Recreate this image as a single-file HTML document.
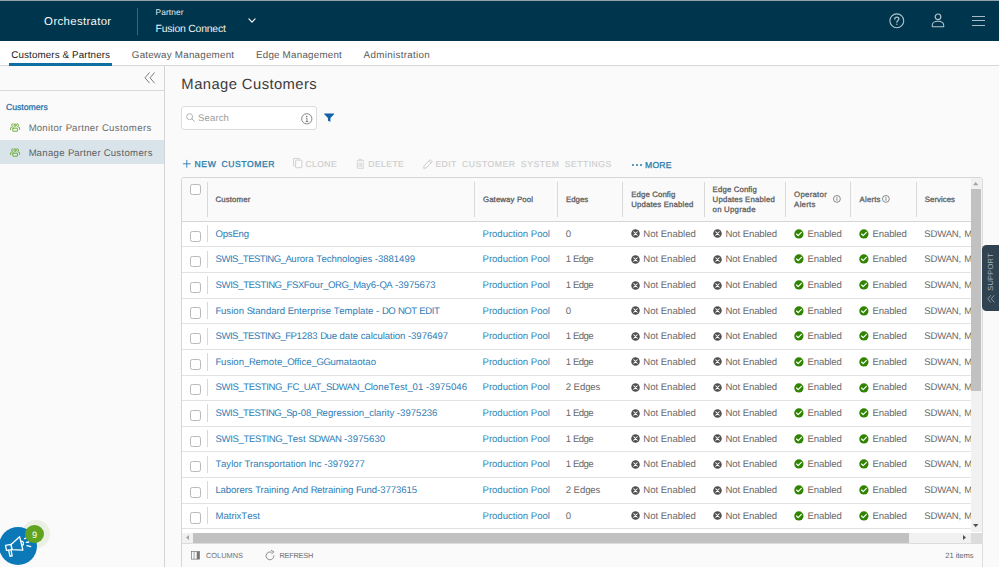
<!DOCTYPE html>
<html><head><meta charset="utf-8"><title>Orchestrator</title>
<style>
*{box-sizing:border-box;margin:0;padding:0}
html,body{width:999px;height:567px;overflow:hidden;background:#fafafa;font-family:"Liberation Sans",sans-serif}
.a{position:absolute}
.t{position:absolute;white-space:pre;font-family:"Liberation Sans",sans-serif;text-rendering:geometricPrecision}
.ic{position:absolute;overflow:visible}
#hdr{left:0;top:0;width:999px;height:41.3px;background:#00364d}
#topline{left:0;top:0;width:999px;height:1px;background:#93a1a8}
#nav{left:0;top:41.3px;width:999px;height:24.5px;background:#fff;border-bottom:1px solid #d7d7d7}
#navact{left:9px;top:63.1px;width:103px;height:2.5px;background:#0f6fa3}
#side{left:0;top:65.8px;width:164.6px;height:502px;background:#fafafa;border-right:1px solid #d4d4d4}
#sidetop{left:0;top:90px;width:164px;height:1px;background:#d9d9d9}
#sel{left:0;top:139.6px;width:164px;height:24.3px;background:#d9e4ea}
#search{left:181px;top:106px;width:135.6px;height:24px;background:#fff;border:1px solid #dcdcdc;border-radius:3px}
#tbl{left:181px;top:176.8px;width:801.6px;height:400px;background:#fff;border:1px solid #d6d6d6;border-radius:3px}
#thead{left:182px;top:177.8px;width:789px;height:42.9px;background:#fafafa;border-radius:2px 0 0 0}
#theadb{left:182px;top:220.6px;width:789px;height:1px;background:#d6d6d6}
.rb{position:absolute;left:182px;width:789px;height:1px;background:#e2e2e2}
.cb{position:absolute;left:189.5px;width:11.2px;height:11.2px;border:1px solid #b9b9b9;border-radius:2.4px;background:#fff}
.vs{position:absolute;left:206.7px;width:1px;height:17.4px;background:#d8d8d8}
.hs{position:absolute;top:181.600px;width:1px;height:35.400px;background:#d9d9d9}
#vsb{left:971px;top:177.8px;width:10.6px;height:354.7px;background:#f1f1f1;border-radius:0 2px 0 0}
#vthumb{left:971px;top:189px;width:10px;height:202px;background:#c1c1c1}
#hsb{left:182px;top:532.5px;width:789px;height:10.2px;background:#f1f1f1}
#hthumb{left:193px;top:532.5px;width:716px;height:10.2px;background:#c1c1c1}
#corner{left:971px;top:532.5px;width:10.6px;height:10.2px;background:#dcdcdc}
#foot{left:182px;top:542.7px;width:799.6px;height:30px;background:#fafafa;border-top:1px solid #dcdcdc}
#support{left:982.2px;top:245.2px;width:20px;height:65.8px;background:#314351;border-radius:4.5px 0 0 4.5px}
</style></head><body>
<div class="a" id="hdr"></div><div class="a" id="topline"></div>
<div class="a" style="left:137.300px;top:7.500px;width:1px;height:27px;background:#3d6577"></div>
<svg class="ic" style="left:247.5px;top:18.2px" width="8" height="5.3" viewBox="0 0 9 6"><path d="M1 1 L4.5 4.6 L8 1" fill="none" stroke="#fafafa" stroke-width="1.3" stroke-linecap="round" stroke-linejoin="round"/></svg>
<!-- help -->
<svg class="ic" style="left:889.2px;top:13.2px" width="15.6" height="15.6" viewBox="0 0 36 36"><circle cx="18" cy="18" r="16" fill="none" stroke="#b4c4cc" stroke-width="2.500"/><path d="M13.2 14.2 C13.2 11 15.4 9.6 18 9.6 C20.8 9.6 22.8 11.2 22.8 13.8 C22.8 17.4 18.2 17.2 18.2 21.4" fill="none" stroke="#b4c4cc" stroke-width="2.700" stroke-linecap="round"/><circle cx="18.2" cy="26" r="1.6" fill="#b4c4cc"/></svg>
<!-- user -->
<svg class="ic" style="left:931px;top:13.4px" width="14" height="15" viewBox="0 0 28 30"><circle cx="14" cy="7.600" r="5.600" fill="none" stroke="#b4c4cc" stroke-width="2.400"/><path d="M2.6 27.6 L2.6 24 C2.6 19.6 6.6 16.6 14 16.6 C21.4 16.6 25.4 19.6 25.4 24 L25.4 27.6 Z" fill="none" stroke="#b4c4cc" stroke-width="2.1" stroke-linejoin="round"/></svg>
<!-- hamburger -->
<div class="a" style="left:971.6px;top:15.7px;width:13.7px;height:1.1px;background:#a9bac3"></div>
<div class="a" style="left:971.6px;top:20.4px;width:13.7px;height:1.1px;background:#a9bac3"></div>
<div class="a" style="left:971.6px;top:25.2px;width:13.7px;height:1.1px;background:#a9bac3"></div>

<div class="a" id="nav"></div><div class="a" id="navact"></div>
<div class="a" id="side"></div><div class="a" id="sidetop"></div><div class="a" id="sel"></div>
<!-- collapse -->
<svg class="ic" style="left:143.6px;top:72.4px" width="11.6" height="11.6" viewBox="0 0 23 23"><path d="M10.5 1.5 L2 11.5 L10.5 21.5 M20.5 1.5 L12 11.5 L20.5 21.5" fill="none" stroke="#666" stroke-width="1.7" stroke-linecap="round" stroke-linejoin="round"/></svg>
<!-- users icons -->
<svg class="ic" style="left:9.5px;top:123.1px" width="10.2" height="8.8" viewBox="0 0 10.2 8.8"><g fill="none" stroke="#5fa624" stroke-width="0.9" stroke-linecap="round"><circle cx="5.1" cy="2.2" r="1.2"/><rect x="2.75" y="5.15" width="4.7" height="3.1" rx="0.4"/><path d="M3.1 0.600 C1.500 0.700 1.100 2.700 2.300 3.500"/><path d="M7.100 0.600 C8.700 0.700 9.100 2.700 7.900 3.500"/><path d="M0.600 6.500 L0.600 5.100 C0.600 4.300 1.200 3.900 2 4"/><path d="M9.600 6.500 L9.600 5.100 C9.600 4.300 9 3.900 8.200 4"/></g></svg>
<svg class="ic" style="left:9.5px;top:147.6px" width="10.2" height="8.8" viewBox="0 0 10.2 8.8"><g fill="none" stroke="#5fa624" stroke-width="0.9" stroke-linecap="round"><circle cx="5.1" cy="2.2" r="1.2"/><rect x="2.75" y="5.15" width="4.7" height="3.1" rx="0.4"/><path d="M3.1 0.600 C1.500 0.700 1.100 2.700 2.300 3.500"/><path d="M7.100 0.600 C8.700 0.700 9.100 2.700 7.900 3.500"/><path d="M0.600 6.500 L0.600 5.100 C0.600 4.300 1.200 3.900 2 4"/><path d="M9.600 6.500 L9.600 5.100 C9.600 4.300 9 3.900 8.200 4"/></g></svg>

<div class="a" id="search"></div>
<svg class="ic" style="left:185.7px;top:112.9px" width="9.2" height="9.2" viewBox="0 0 19 19"><circle cx="7.6" cy="7.6" r="6.2" fill="none" stroke="#999" stroke-width="1.5"/><path d="M12.2 12.2 L17.4 17.4" stroke="#999" stroke-width="1.7" stroke-linecap="round"/></svg>
<svg class="ic" style="left:301.300px;top:112.700px" width="11.600" height="11.600" viewBox="0 0 24 24"><circle cx="12" cy="12" r="10.6" fill="none" stroke="#6a6a6a" stroke-width="1.7"/><circle cx="12" cy="7" r="1.5" fill="#6a6a6a"/><path d="M10 10.6 L12.4 10.6 L12.4 17.6 M9.6 17.8 L15 17.8" fill="none" stroke="#6a6a6a" stroke-width="1.7"/></svg>
<svg class="ic" style="left:323.800px;top:112.800px" width="10.400" height="9.200" viewBox="0 0 22 19"><path d="M0.6 0.6 L21.4 0.6 L21.4 2.4 L13.6 10.4 L13.6 18.4 L8.4 16 L8.4 10.4 L0.6 2.4 Z" fill="#0f62a8"/></svg>

<!-- action icons -->
<svg class="ic" style="left:183.2px;top:159.9px" width="7.6" height="7.6" viewBox="0 0 16 16"><path d="M8 0.6 L8 15.400 M0.6 8 L15.400 8" stroke="#2b7db3" stroke-width="1.9" stroke-linecap="round"/></svg>
<svg class="ic" style="left:292.8px;top:158.4px" width="9.4" height="10.2" viewBox="0 0 18.8 20.400"><path d="M3.400 15.600 L1 15.600 L1 1 L12.600 1 L12.600 3" fill="none" stroke="#cdcdcd" stroke-width="1.700" stroke-linejoin="round"/><rect x="5.200" y="4.200" width="12.600" height="15.200" rx="1.400" fill="none" stroke="#cdcdcd" stroke-width="1.900"/></svg>
<svg class="ic" style="left:356.2px;top:158.6px" width="8.6" height="9.800" viewBox="0 0 17 20"><path d="M0.6 3.600 L16.400 3.600 M5.600 3.400 L5.600 0.800 L11.4 0.800 L11.4 3.400" fill="none" stroke="#cdcdcd" stroke-width="1.6"/><path d="M2.4 6 L2.4 19 L14.6 19 L14.6 6" fill="none" stroke="#cdcdcd" stroke-width="1.7"/><path d="M6 7.600 L6 16 M8.5 7.600 L8.5 16 M11 7.600 L11 16" stroke="#cdcdcd" stroke-width="1.4"/></svg>
<svg class="ic" style="left:422.800px;top:158.700px" width="10" height="10" viewBox="0 0 20 20"><path d="M14.600 1.200 L18.800 5.400 L6.400 17.800 L1.400 18.600 L2.200 13.600 Z M12 3.800 L16.200 8" fill="none" stroke="#c6c6c6" stroke-width="1.800" stroke-linejoin="round"/></svg>
<div class="a" style="left:632.2px;top:163.900px;width:2.1px;height:2.1px;border-radius:50%;background:#2b7db3"></div>
<div class="a" style="left:636.3px;top:163.900px;width:2.1px;height:2.1px;border-radius:50%;background:#2b7db3"></div>
<div class="a" style="left:640.4px;top:163.900px;width:2.1px;height:2.1px;border-radius:50%;background:#2b7db3"></div>

<!-- table -->
<div class="a" id="tbl"></div><div class="a" id="thead"></div><div class="a" id="theadb"></div>
<div class="cb" style="top:183.800px"></div>
<div class="hs" style="left:206.7px"></div><div class="hs" style="left:474px"></div><div class="hs" style="left:557.2px"></div><div class="hs" style="left:622.3px"></div><div class="hs" style="left:703.7px"></div><div class="hs" style="left:785.4px"></div><div class="hs" style="left:850.4px"></div><div class="hs" style="left:915.800px"></div>
<!-- header info icons -->
<svg class="ic" style="left:832.8000000000001px;top:195.200px" width="7.800" height="7.800" viewBox="0 0 24 24"><circle cx="12" cy="12" r="10.600" fill="none" stroke="#5e5e5e" stroke-width="2.200"/><circle cx="12" cy="7" r="1.700" fill="#5e5e5e"/><path d="M12 10.400 L12 17.600" stroke="#5e5e5e" stroke-width="2.400"/></svg>
<svg class="ic" style="left:882.2px;top:195.200px" width="7.800" height="7.800" viewBox="0 0 24 24"><circle cx="12" cy="12" r="10.600" fill="none" stroke="#5e5e5e" stroke-width="2.200"/><circle cx="12" cy="7" r="1.700" fill="#5e5e5e"/><path d="M12 10.400 L12 17.600" stroke="#5e5e5e" stroke-width="2.400"/></svg>
<div class="a" id="foot"></div>
<div class="rb" style="top:246.38px"></div><div class="cb" style="top:230.55px"></div><div class="vs" style="top:225.05px"></div>
<svg class="ic" style="left:630.75px;top:229.25px" width="9" height="9" viewBox="0 0 36 36"><circle cx="18" cy="18" r="17" fill="#505050"/><path d="M11 11 L25 25 M25 11 L11 25" stroke="#fff" stroke-width="4.2" stroke-linecap="round"/></svg>
<svg class="ic" style="left:712.50px;top:229.25px" width="9" height="9" viewBox="0 0 36 36"><circle cx="18" cy="18" r="17" fill="#505050"/><path d="M11 11 L25 25 M25 11 L11 25" stroke="#fff" stroke-width="4.2" stroke-linecap="round"/></svg>
<svg class="ic" style="left:794.00px;top:228.85px" width="9.8" height="9.8" viewBox="0 0 36 36"><circle cx="18" cy="18" r="17" fill="#2f8400"/><path d="M9.5 18.5 L15.5 24.5 L27 12.5" fill="none" stroke="#fff" stroke-width="4.4" stroke-linecap="round" stroke-linejoin="round"/></svg>
<svg class="ic" style="left:859.20px;top:228.85px" width="9.8" height="9.8" viewBox="0 0 36 36"><circle cx="18" cy="18" r="17" fill="#2f8400"/><path d="M9.5 18.5 L15.5 24.5 L27 12.5" fill="none" stroke="#fff" stroke-width="4.4" stroke-linecap="round" stroke-linejoin="round"/></svg>
<div class="rb" style="top:272.00px"></div><div class="cb" style="top:256.18px"></div><div class="vs" style="top:250.68px"></div>
<svg class="ic" style="left:630.75px;top:254.88px" width="9" height="9" viewBox="0 0 36 36"><circle cx="18" cy="18" r="17" fill="#505050"/><path d="M11 11 L25 25 M25 11 L11 25" stroke="#fff" stroke-width="4.2" stroke-linecap="round"/></svg>
<svg class="ic" style="left:712.50px;top:254.88px" width="9" height="9" viewBox="0 0 36 36"><circle cx="18" cy="18" r="17" fill="#505050"/><path d="M11 11 L25 25 M25 11 L11 25" stroke="#fff" stroke-width="4.2" stroke-linecap="round"/></svg>
<svg class="ic" style="left:794.00px;top:254.47px" width="9.8" height="9.8" viewBox="0 0 36 36"><circle cx="18" cy="18" r="17" fill="#2f8400"/><path d="M9.5 18.5 L15.5 24.5 L27 12.5" fill="none" stroke="#fff" stroke-width="4.4" stroke-linecap="round" stroke-linejoin="round"/></svg>
<svg class="ic" style="left:859.20px;top:254.47px" width="9.8" height="9.8" viewBox="0 0 36 36"><circle cx="18" cy="18" r="17" fill="#2f8400"/><path d="M9.5 18.5 L15.5 24.5 L27 12.5" fill="none" stroke="#fff" stroke-width="4.4" stroke-linecap="round" stroke-linejoin="round"/></svg>
<div class="rb" style="top:297.62px"></div><div class="cb" style="top:281.80px"></div><div class="vs" style="top:276.30px"></div>
<svg class="ic" style="left:630.75px;top:280.50px" width="9" height="9" viewBox="0 0 36 36"><circle cx="18" cy="18" r="17" fill="#505050"/><path d="M11 11 L25 25 M25 11 L11 25" stroke="#fff" stroke-width="4.2" stroke-linecap="round"/></svg>
<svg class="ic" style="left:712.50px;top:280.50px" width="9" height="9" viewBox="0 0 36 36"><circle cx="18" cy="18" r="17" fill="#505050"/><path d="M11 11 L25 25 M25 11 L11 25" stroke="#fff" stroke-width="4.2" stroke-linecap="round"/></svg>
<svg class="ic" style="left:794.00px;top:280.10px" width="9.8" height="9.8" viewBox="0 0 36 36"><circle cx="18" cy="18" r="17" fill="#2f8400"/><path d="M9.5 18.5 L15.5 24.5 L27 12.5" fill="none" stroke="#fff" stroke-width="4.4" stroke-linecap="round" stroke-linejoin="round"/></svg>
<svg class="ic" style="left:859.20px;top:280.10px" width="9.8" height="9.8" viewBox="0 0 36 36"><circle cx="18" cy="18" r="17" fill="#2f8400"/><path d="M9.5 18.5 L15.5 24.5 L27 12.5" fill="none" stroke="#fff" stroke-width="4.4" stroke-linecap="round" stroke-linejoin="round"/></svg>
<div class="rb" style="top:323.25px"></div><div class="cb" style="top:307.43px"></div><div class="vs" style="top:301.93px"></div>
<svg class="ic" style="left:630.75px;top:306.12px" width="9" height="9" viewBox="0 0 36 36"><circle cx="18" cy="18" r="17" fill="#505050"/><path d="M11 11 L25 25 M25 11 L11 25" stroke="#fff" stroke-width="4.2" stroke-linecap="round"/></svg>
<svg class="ic" style="left:712.50px;top:306.12px" width="9" height="9" viewBox="0 0 36 36"><circle cx="18" cy="18" r="17" fill="#505050"/><path d="M11 11 L25 25 M25 11 L11 25" stroke="#fff" stroke-width="4.2" stroke-linecap="round"/></svg>
<svg class="ic" style="left:794.00px;top:305.73px" width="9.8" height="9.8" viewBox="0 0 36 36"><circle cx="18" cy="18" r="17" fill="#2f8400"/><path d="M9.5 18.5 L15.5 24.5 L27 12.5" fill="none" stroke="#fff" stroke-width="4.4" stroke-linecap="round" stroke-linejoin="round"/></svg>
<svg class="ic" style="left:859.20px;top:305.73px" width="9.8" height="9.8" viewBox="0 0 36 36"><circle cx="18" cy="18" r="17" fill="#2f8400"/><path d="M9.5 18.5 L15.5 24.5 L27 12.5" fill="none" stroke="#fff" stroke-width="4.4" stroke-linecap="round" stroke-linejoin="round"/></svg>
<div class="rb" style="top:348.88px"></div><div class="cb" style="top:333.05px"></div><div class="vs" style="top:327.55px"></div>
<svg class="ic" style="left:630.75px;top:331.75px" width="9" height="9" viewBox="0 0 36 36"><circle cx="18" cy="18" r="17" fill="#505050"/><path d="M11 11 L25 25 M25 11 L11 25" stroke="#fff" stroke-width="4.2" stroke-linecap="round"/></svg>
<svg class="ic" style="left:712.50px;top:331.75px" width="9" height="9" viewBox="0 0 36 36"><circle cx="18" cy="18" r="17" fill="#505050"/><path d="M11 11 L25 25 M25 11 L11 25" stroke="#fff" stroke-width="4.2" stroke-linecap="round"/></svg>
<svg class="ic" style="left:794.00px;top:331.35px" width="9.8" height="9.8" viewBox="0 0 36 36"><circle cx="18" cy="18" r="17" fill="#2f8400"/><path d="M9.5 18.5 L15.5 24.5 L27 12.5" fill="none" stroke="#fff" stroke-width="4.4" stroke-linecap="round" stroke-linejoin="round"/></svg>
<svg class="ic" style="left:859.20px;top:331.35px" width="9.8" height="9.8" viewBox="0 0 36 36"><circle cx="18" cy="18" r="17" fill="#2f8400"/><path d="M9.5 18.5 L15.5 24.5 L27 12.5" fill="none" stroke="#fff" stroke-width="4.4" stroke-linecap="round" stroke-linejoin="round"/></svg>
<div class="rb" style="top:374.50px"></div><div class="cb" style="top:358.68px"></div><div class="vs" style="top:353.18px"></div>
<svg class="ic" style="left:630.75px;top:357.38px" width="9" height="9" viewBox="0 0 36 36"><circle cx="18" cy="18" r="17" fill="#505050"/><path d="M11 11 L25 25 M25 11 L11 25" stroke="#fff" stroke-width="4.2" stroke-linecap="round"/></svg>
<svg class="ic" style="left:712.50px;top:357.38px" width="9" height="9" viewBox="0 0 36 36"><circle cx="18" cy="18" r="17" fill="#505050"/><path d="M11 11 L25 25 M25 11 L11 25" stroke="#fff" stroke-width="4.2" stroke-linecap="round"/></svg>
<svg class="ic" style="left:794.00px;top:356.98px" width="9.8" height="9.8" viewBox="0 0 36 36"><circle cx="18" cy="18" r="17" fill="#2f8400"/><path d="M9.5 18.5 L15.5 24.5 L27 12.5" fill="none" stroke="#fff" stroke-width="4.4" stroke-linecap="round" stroke-linejoin="round"/></svg>
<svg class="ic" style="left:859.20px;top:356.98px" width="9.8" height="9.8" viewBox="0 0 36 36"><circle cx="18" cy="18" r="17" fill="#2f8400"/><path d="M9.5 18.5 L15.5 24.5 L27 12.5" fill="none" stroke="#fff" stroke-width="4.4" stroke-linecap="round" stroke-linejoin="round"/></svg>
<div class="rb" style="top:400.12px"></div><div class="cb" style="top:384.30px"></div><div class="vs" style="top:378.80px"></div>
<svg class="ic" style="left:630.75px;top:383.00px" width="9" height="9" viewBox="0 0 36 36"><circle cx="18" cy="18" r="17" fill="#505050"/><path d="M11 11 L25 25 M25 11 L11 25" stroke="#fff" stroke-width="4.2" stroke-linecap="round"/></svg>
<svg class="ic" style="left:712.50px;top:383.00px" width="9" height="9" viewBox="0 0 36 36"><circle cx="18" cy="18" r="17" fill="#505050"/><path d="M11 11 L25 25 M25 11 L11 25" stroke="#fff" stroke-width="4.2" stroke-linecap="round"/></svg>
<svg class="ic" style="left:794.00px;top:382.60px" width="9.8" height="9.8" viewBox="0 0 36 36"><circle cx="18" cy="18" r="17" fill="#2f8400"/><path d="M9.5 18.5 L15.5 24.5 L27 12.5" fill="none" stroke="#fff" stroke-width="4.4" stroke-linecap="round" stroke-linejoin="round"/></svg>
<svg class="ic" style="left:859.20px;top:382.60px" width="9.8" height="9.8" viewBox="0 0 36 36"><circle cx="18" cy="18" r="17" fill="#2f8400"/><path d="M9.5 18.5 L15.5 24.5 L27 12.5" fill="none" stroke="#fff" stroke-width="4.4" stroke-linecap="round" stroke-linejoin="round"/></svg>
<div class="rb" style="top:425.75px"></div><div class="cb" style="top:409.93px"></div><div class="vs" style="top:404.43px"></div>
<svg class="ic" style="left:630.75px;top:408.62px" width="9" height="9" viewBox="0 0 36 36"><circle cx="18" cy="18" r="17" fill="#505050"/><path d="M11 11 L25 25 M25 11 L11 25" stroke="#fff" stroke-width="4.2" stroke-linecap="round"/></svg>
<svg class="ic" style="left:712.50px;top:408.62px" width="9" height="9" viewBox="0 0 36 36"><circle cx="18" cy="18" r="17" fill="#505050"/><path d="M11 11 L25 25 M25 11 L11 25" stroke="#fff" stroke-width="4.2" stroke-linecap="round"/></svg>
<svg class="ic" style="left:794.00px;top:408.23px" width="9.8" height="9.8" viewBox="0 0 36 36"><circle cx="18" cy="18" r="17" fill="#2f8400"/><path d="M9.5 18.5 L15.5 24.5 L27 12.5" fill="none" stroke="#fff" stroke-width="4.4" stroke-linecap="round" stroke-linejoin="round"/></svg>
<svg class="ic" style="left:859.20px;top:408.23px" width="9.8" height="9.8" viewBox="0 0 36 36"><circle cx="18" cy="18" r="17" fill="#2f8400"/><path d="M9.5 18.5 L15.5 24.5 L27 12.5" fill="none" stroke="#fff" stroke-width="4.4" stroke-linecap="round" stroke-linejoin="round"/></svg>
<div class="rb" style="top:451.38px"></div><div class="cb" style="top:435.55px"></div><div class="vs" style="top:430.05px"></div>
<svg class="ic" style="left:630.75px;top:434.25px" width="9" height="9" viewBox="0 0 36 36"><circle cx="18" cy="18" r="17" fill="#505050"/><path d="M11 11 L25 25 M25 11 L11 25" stroke="#fff" stroke-width="4.2" stroke-linecap="round"/></svg>
<svg class="ic" style="left:712.50px;top:434.25px" width="9" height="9" viewBox="0 0 36 36"><circle cx="18" cy="18" r="17" fill="#505050"/><path d="M11 11 L25 25 M25 11 L11 25" stroke="#fff" stroke-width="4.2" stroke-linecap="round"/></svg>
<svg class="ic" style="left:794.00px;top:433.85px" width="9.8" height="9.8" viewBox="0 0 36 36"><circle cx="18" cy="18" r="17" fill="#2f8400"/><path d="M9.5 18.5 L15.5 24.5 L27 12.5" fill="none" stroke="#fff" stroke-width="4.4" stroke-linecap="round" stroke-linejoin="round"/></svg>
<svg class="ic" style="left:859.20px;top:433.85px" width="9.8" height="9.8" viewBox="0 0 36 36"><circle cx="18" cy="18" r="17" fill="#2f8400"/><path d="M9.5 18.5 L15.5 24.5 L27 12.5" fill="none" stroke="#fff" stroke-width="4.4" stroke-linecap="round" stroke-linejoin="round"/></svg>
<div class="rb" style="top:477.00px"></div><div class="cb" style="top:461.18px"></div><div class="vs" style="top:455.68px"></div>
<svg class="ic" style="left:630.75px;top:459.88px" width="9" height="9" viewBox="0 0 36 36"><circle cx="18" cy="18" r="17" fill="#505050"/><path d="M11 11 L25 25 M25 11 L11 25" stroke="#fff" stroke-width="4.2" stroke-linecap="round"/></svg>
<svg class="ic" style="left:712.50px;top:459.88px" width="9" height="9" viewBox="0 0 36 36"><circle cx="18" cy="18" r="17" fill="#505050"/><path d="M11 11 L25 25 M25 11 L11 25" stroke="#fff" stroke-width="4.2" stroke-linecap="round"/></svg>
<svg class="ic" style="left:794.00px;top:459.48px" width="9.8" height="9.8" viewBox="0 0 36 36"><circle cx="18" cy="18" r="17" fill="#2f8400"/><path d="M9.5 18.5 L15.5 24.5 L27 12.5" fill="none" stroke="#fff" stroke-width="4.4" stroke-linecap="round" stroke-linejoin="round"/></svg>
<svg class="ic" style="left:859.20px;top:459.48px" width="9.8" height="9.8" viewBox="0 0 36 36"><circle cx="18" cy="18" r="17" fill="#2f8400"/><path d="M9.5 18.5 L15.5 24.5 L27 12.5" fill="none" stroke="#fff" stroke-width="4.4" stroke-linecap="round" stroke-linejoin="round"/></svg>
<div class="rb" style="top:502.62px"></div><div class="cb" style="top:486.80px"></div><div class="vs" style="top:481.30px"></div>
<svg class="ic" style="left:630.75px;top:485.50px" width="9" height="9" viewBox="0 0 36 36"><circle cx="18" cy="18" r="17" fill="#505050"/><path d="M11 11 L25 25 M25 11 L11 25" stroke="#fff" stroke-width="4.2" stroke-linecap="round"/></svg>
<svg class="ic" style="left:712.50px;top:485.50px" width="9" height="9" viewBox="0 0 36 36"><circle cx="18" cy="18" r="17" fill="#505050"/><path d="M11 11 L25 25 M25 11 L11 25" stroke="#fff" stroke-width="4.2" stroke-linecap="round"/></svg>
<svg class="ic" style="left:794.00px;top:485.10px" width="9.8" height="9.8" viewBox="0 0 36 36"><circle cx="18" cy="18" r="17" fill="#2f8400"/><path d="M9.5 18.5 L15.5 24.5 L27 12.5" fill="none" stroke="#fff" stroke-width="4.4" stroke-linecap="round" stroke-linejoin="round"/></svg>
<svg class="ic" style="left:859.20px;top:485.10px" width="9.8" height="9.8" viewBox="0 0 36 36"><circle cx="18" cy="18" r="17" fill="#2f8400"/><path d="M9.5 18.5 L15.5 24.5 L27 12.5" fill="none" stroke="#fff" stroke-width="4.4" stroke-linecap="round" stroke-linejoin="round"/></svg>
<div class="rb" style="top:528.25px"></div><div class="cb" style="top:512.42px"></div><div class="vs" style="top:506.93px"></div>
<svg class="ic" style="left:630.75px;top:511.12px" width="9" height="9" viewBox="0 0 36 36"><circle cx="18" cy="18" r="17" fill="#505050"/><path d="M11 11 L25 25 M25 11 L11 25" stroke="#fff" stroke-width="4.2" stroke-linecap="round"/></svg>
<svg class="ic" style="left:712.50px;top:511.12px" width="9" height="9" viewBox="0 0 36 36"><circle cx="18" cy="18" r="17" fill="#505050"/><path d="M11 11 L25 25 M25 11 L11 25" stroke="#fff" stroke-width="4.2" stroke-linecap="round"/></svg>
<svg class="ic" style="left:794.00px;top:510.73px" width="9.8" height="9.8" viewBox="0 0 36 36"><circle cx="18" cy="18" r="17" fill="#2f8400"/><path d="M9.5 18.5 L15.5 24.5 L27 12.5" fill="none" stroke="#fff" stroke-width="4.4" stroke-linecap="round" stroke-linejoin="round"/></svg>
<svg class="ic" style="left:859.20px;top:510.73px" width="9.8" height="9.8" viewBox="0 0 36 36"><circle cx="18" cy="18" r="17" fill="#2f8400"/><path d="M9.5 18.5 L15.5 24.5 L27 12.5" fill="none" stroke="#fff" stroke-width="4.4" stroke-linecap="round" stroke-linejoin="round"/></svg>
<span class="t" style="left:44.00px;top:15px;line-height:14px;font-size:11.4px;color:#fafafa;"><span style="letter-spacing:0.585px">O</span><span style="letter-spacing:0.326px">rchestrator</span></span>
<span class="t" style="left:155.50px;top:6px;line-height:12px;font-size:8.3px;color:#e4eaee;"><span style="letter-spacing:0.176px">P</span><span style="letter-spacing:0.115px">artner</span></span>
<span class="t" style="left:155.50px;top:23px;line-height:13px;font-size:10.4px;color:#eef2f4;"><span style="letter-spacing:-0.237px">F</span><span style="letter-spacing:-0.172px">usion </span><span style="letter-spacing:-0.280px">C</span><span style="letter-spacing:-0.194px">onnect</span></span>
<span class="t" style="left:11.20px;top:49px;line-height:13px;font-size:9.8px;color:#1a1a1a;"><span style="letter-spacing:0.183px">C</span><span style="letter-spacing:0.123px">ustomers &amp; </span><span style="letter-spacing:0.169px">P</span><span style="letter-spacing:0.113px">artners</span></span>
<span class="t" style="left:131.70px;top:49px;line-height:13px;font-size:9.8px;color:#5a5a5a;"><span style="letter-spacing:0.310px">G</span><span style="letter-spacing:0.196px">ateway </span><span style="letter-spacing:0.332px">M</span><span style="letter-spacing:0.221px">anagement</span></span>
<span class="t" style="left:256.00px;top:49px;line-height:13px;font-size:9.8px;color:#5a5a5a;"><span style="letter-spacing:0.251px">E</span><span style="letter-spacing:0.183px">dge </span><span style="letter-spacing:0.313px">M</span><span style="letter-spacing:0.209px">anagement</span></span>
<span class="t" style="left:363.50px;top:49px;line-height:13px;font-size:9.8px;color:#5a5a5a;"><span style="letter-spacing:0.465px">A</span><span style="letter-spacing:0.303px">dministration</span></span>
<span class="t" style="left:6.00px;top:101px;line-height:12px;font-size:8.7px;color:#1f6fa8;-webkit-text-stroke:0.25px #1f6fa8;"><span style="letter-spacing:-0.040px">C</span><span style="letter-spacing:-0.028px">ustomers</span></span>
<span class="t" style="left:28.75px;top:122px;line-height:13px;font-size:9.6px;color:#6c6c6c;"><span style="letter-spacing:-0.024px">M</span><span style="letter-spacing:0.319px">onitor </span><span style="letter-spacing:-0.019px">P</span><span style="letter-spacing:0.332px">artner </span><span style="letter-spacing:-0.021px">C</span><span style="letter-spacing:0.413px">ustomers</span></span>
<span class="t" style="left:28.75px;top:147px;line-height:13px;font-size:9.6px;color:#5e5e5e;"><span style="letter-spacing:-0.144px">M</span><span style="letter-spacing:0.330px">anage </span><span style="letter-spacing:-0.115px">P</span><span style="letter-spacing:0.267px">artner </span><span style="letter-spacing:-0.125px">C</span><span style="letter-spacing:0.333px">ustomers</span></span>
<span class="t" style="left:181.25px;top:76px;line-height:18px;font-size:14.8px;color:#3c3c3c;"><span style="letter-spacing:0.631px">M</span><span style="letter-spacing:0.386px">anage </span><span style="letter-spacing:0.547px">C</span><span style="letter-spacing:0.389px">ustomers</span></span>
<span class="t" style="left:198.00px;top:112px;line-height:13px;font-size:9.6px;color:#a0a0a0;"><span style="letter-spacing:0.125px">S</span><span style="letter-spacing:0.094px">earch</span></span>
<span class="t" style="left:194.50px;top:158px;line-height:12px;font-size:8.6px;color:#2a80ab;word-spacing:2px;-webkit-text-stroke:0.3px #2a80ab;"><span style="letter-spacing:0.601px">NEW</span><span style="letter-spacing:0.810px"> </span><span style="letter-spacing:0.550px">CUSTOMER</span></span>
<span class="t" style="left:305.50px;top:158px;line-height:12px;font-size:8.6px;color:#cfcfcf;-webkit-text-stroke:0.18px #cfcfcf;"><span style="letter-spacing:0.378px">CLONE</span></span>
<span class="t" style="left:368.25px;top:158px;line-height:12px;font-size:8.6px;color:#cfcfcf;-webkit-text-stroke:0.18px #cfcfcf;"><span style="letter-spacing:0.427px">DELETE</span></span>
<span class="t" style="left:435.40px;top:158px;line-height:12px;font-size:8.6px;color:#cfcfcf;word-spacing:2px;-webkit-text-stroke:0.18px #cfcfcf;"><span style="letter-spacing:0.457px">EDIT</span><span style="letter-spacing:0.827px"> </span><span style="letter-spacing:0.572px">CUSTOMER</span><span style="letter-spacing:0.827px"> </span><span style="letter-spacing:0.550px">SYSTEM</span><span style="letter-spacing:0.827px"> </span><span style="letter-spacing:0.501px">SETTINGS</span></span>
<span class="t" style="left:645.00px;top:159px;line-height:12px;font-size:8.6px;color:#2a80ab;-webkit-text-stroke:0.3px #2a80ab;"><span style="letter-spacing:0.255px">MORE</span></span>
<span class="t" style="left:215.50px;top:194px;line-height:11px;font-size:7.8px;color:#5c5c5c;-webkit-text-stroke:0.28px #5c5c5c;"><span style="letter-spacing:0.181px">C</span><span style="letter-spacing:0.129px">ustomer</span></span>
<span class="t" style="left:482.90px;top:194px;line-height:11px;font-size:7.8px;color:#5c5c5c;-webkit-text-stroke:0.28px #5c5c5c;"><span style="letter-spacing:0.192px">G</span><span style="letter-spacing:0.122px">ateway </span><span style="letter-spacing:0.165px">P</span><span style="letter-spacing:0.110px">ool</span></span>
<span class="t" style="left:566.00px;top:194px;line-height:11px;font-size:7.8px;color:#5c5c5c;-webkit-text-stroke:0.28px #5c5c5c;"><span style="letter-spacing:0.041px">E</span><span style="letter-spacing:0.033px">dges</span></span>
<span class="t" style="left:631.20px;top:189px;line-height:11px;font-size:7.8px;color:#5c5c5c;-webkit-text-stroke:0.28px #5c5c5c;"><span style="letter-spacing:0.151px">E</span><span style="letter-spacing:0.110px">dge </span><span style="letter-spacing:0.164px">C</span><span style="letter-spacing:0.098px">onfig</span></span>
<span class="t" style="left:631.20px;top:199px;line-height:11px;font-size:7.8px;color:#5c5c5c;-webkit-text-stroke:0.28px #5c5c5c;"><span style="letter-spacing:0.222px">U</span><span style="letter-spacing:0.144px">pdates </span><span style="letter-spacing:0.205px">E</span><span style="letter-spacing:0.154px">nabled</span></span>
<span class="t" style="left:712.60px;top:184px;line-height:11px;font-size:7.8px;color:#5c5c5c;-webkit-text-stroke:0.28px #5c5c5c;"><span style="letter-spacing:0.163px">E</span><span style="letter-spacing:0.119px">dge </span><span style="letter-spacing:0.177px">C</span><span style="letter-spacing:0.106px">onfig</span></span>
<span class="t" style="left:712.60px;top:194px;line-height:11px;font-size:7.8px;color:#5c5c5c;-webkit-text-stroke:0.28px #5c5c5c;"><span style="letter-spacing:0.232px">U</span><span style="letter-spacing:0.150px">pdates </span><span style="letter-spacing:0.214px">E</span><span style="letter-spacing:0.160px">nabled</span></span>
<span class="t" style="left:712.60px;top:204px;line-height:11px;font-size:7.8px;color:#5c5c5c;-webkit-text-stroke:0.28px #5c5c5c;"><span style="letter-spacing:0.207px">on </span><span style="letter-spacing:0.323px">U</span><span style="letter-spacing:0.232px">pgrade</span></span>
<span class="t" style="left:794.00px;top:189px;line-height:11px;font-size:7.8px;color:#5c5c5c;-webkit-text-stroke:0.28px #5c5c5c;"><span style="letter-spacing:0.435px">O</span><span style="letter-spacing:0.253px">perator</span></span>
<span class="t" style="left:794.00px;top:199px;line-height:11px;font-size:7.8px;color:#5c5c5c;-webkit-text-stroke:0.28px #5c5c5c;"><span style="letter-spacing:0.434px">A</span><span style="letter-spacing:0.246px">lerts</span></span>
<span class="t" style="left:859.60px;top:194px;line-height:11px;font-size:7.8px;color:#5c5c5c;-webkit-text-stroke:0.28px #5c5c5c;"><span style="letter-spacing:0.251px">A</span><span style="letter-spacing:0.142px">lerts</span></span>
<span class="t" style="left:924.80px;top:194px;line-height:11px;font-size:7.8px;color:#5c5c5c;-webkit-text-stroke:0.28px #5c5c5c;"><span style="letter-spacing:0.051px">S</span><span style="letter-spacing:0.035px">ervices</span></span>
<span class="t" style="left:215.60px;top:228px;line-height:13px;font-size:9.6px;color:#2f7db6;"><span style="letter-spacing:-0.331px">O</span><span style="letter-spacing:-0.225px">ps</span><span style="letter-spacing:-0.284px">E</span><span style="letter-spacing:-0.237px">ng</span></span>
<span class="t" style="left:482.50px;top:228px;line-height:13px;font-size:9.6px;color:#3286b6;"><span style="letter-spacing:-0.025px">P</span><span style="letter-spacing:-0.017px">roduction </span><span style="letter-spacing:-0.025px">P</span><span style="letter-spacing:-0.017px">ool</span></span>
<span class="t" style="left:565.75px;top:228px;line-height:13px;font-size:9.6px;color:#6a6a6a;"><span style="letter-spacing:1.406px">0</span></span>
<span class="t" style="left:643.25px;top:228px;line-height:13px;font-size:9.6px;color:#6a6a6a;"><span style="letter-spacing:-0.043px">N</span><span style="letter-spacing:-0.022px">ot </span><span style="letter-spacing:-0.040px">E</span><span style="letter-spacing:-0.030px">nabled</span></span>
<span class="t" style="left:725.50px;top:228px;line-height:13px;font-size:9.6px;color:#6a6a6a;"><span style="letter-spacing:-0.174px">N</span><span style="letter-spacing:-0.089px">ot </span><span style="letter-spacing:-0.161px">E</span><span style="letter-spacing:-0.121px">nabled</span></span>
<span class="t" style="left:807.50px;top:228px;line-height:13px;font-size:9.6px;color:#6a6a6a;"><span style="letter-spacing:-0.176px">E</span><span style="letter-spacing:-0.132px">nabled</span></span>
<span class="t" style="left:872.50px;top:228px;line-height:13px;font-size:9.6px;color:#6a6a6a;"><span style="letter-spacing:-0.176px">E</span><span style="letter-spacing:-0.132px">nabled</span></span>
<div class="a" style="left:0;top:0;width:971px;height:532px;overflow:hidden"><span class="t" style="left:924.25px;top:228px;line-height:13px;font-size:9.6px;color:#6a6a6a;"><span style="letter-spacing:-0.205px">SDWAN</span><span style="letter-spacing:0.148px">, </span><span style="letter-spacing:-0.208px">MP</span></span></div>
<span class="t" style="left:215.60px;top:253px;line-height:13px;font-size:9.6px;color:#2f7db6;"><span style="letter-spacing:-0.530px">SWIS_TESTING_A</span><span style="letter-spacing:-0.042px">urora </span><span style="letter-spacing:-0.524px">T</span><span style="letter-spacing:-0.047px">echnologies -3881499</span></span>
<span class="t" style="left:482.50px;top:253px;line-height:13px;font-size:9.6px;color:#3286b6;"><span style="letter-spacing:-0.025px">P</span><span style="letter-spacing:-0.017px">roduction </span><span style="letter-spacing:-0.025px">P</span><span style="letter-spacing:-0.017px">ool</span></span>
<span class="t" style="left:565.75px;top:253px;line-height:13px;font-size:9.6px;color:#6a6a6a;"><span style="letter-spacing:-0.420px">1 </span><span style="letter-spacing:-0.671px">E</span><span style="letter-spacing:-0.559px">dge</span></span>
<span class="t" style="left:643.25px;top:253px;line-height:13px;font-size:9.6px;color:#6a6a6a;"><span style="letter-spacing:-0.043px">N</span><span style="letter-spacing:-0.022px">ot </span><span style="letter-spacing:-0.040px">E</span><span style="letter-spacing:-0.030px">nabled</span></span>
<span class="t" style="left:725.50px;top:253px;line-height:13px;font-size:9.6px;color:#6a6a6a;"><span style="letter-spacing:-0.174px">N</span><span style="letter-spacing:-0.089px">ot </span><span style="letter-spacing:-0.161px">E</span><span style="letter-spacing:-0.121px">nabled</span></span>
<span class="t" style="left:807.50px;top:253px;line-height:13px;font-size:9.6px;color:#6a6a6a;"><span style="letter-spacing:-0.176px">E</span><span style="letter-spacing:-0.132px">nabled</span></span>
<span class="t" style="left:872.50px;top:253px;line-height:13px;font-size:9.6px;color:#6a6a6a;"><span style="letter-spacing:-0.176px">E</span><span style="letter-spacing:-0.132px">nabled</span></span>
<div class="a" style="left:0;top:0;width:971px;height:532px;overflow:hidden"><span class="t" style="left:924.25px;top:253px;line-height:13px;font-size:9.6px;color:#6a6a6a;"><span style="letter-spacing:-0.205px">SDWAN</span><span style="letter-spacing:0.148px">, </span><span style="letter-spacing:-0.208px">MP</span></span></div>
<span class="t" style="left:215.60px;top:279px;line-height:13px;font-size:9.6px;color:#2f7db6;"><span style="letter-spacing:-0.449px">SWIS_TESTING_FSXF</span><span style="letter-spacing:0.023px">our</span><span style="letter-spacing:-0.510px">_ORG_M</span><span style="letter-spacing:0.023px">ay6-</span><span style="letter-spacing:-0.523px">QA</span><span style="letter-spacing:0.024px"> -3975673</span></span>
<span class="t" style="left:482.50px;top:279px;line-height:13px;font-size:9.6px;color:#3286b6;"><span style="letter-spacing:-0.025px">P</span><span style="letter-spacing:-0.017px">roduction </span><span style="letter-spacing:-0.025px">P</span><span style="letter-spacing:-0.017px">ool</span></span>
<span class="t" style="left:565.75px;top:279px;line-height:13px;font-size:9.6px;color:#6a6a6a;"><span style="letter-spacing:-0.420px">1 </span><span style="letter-spacing:-0.671px">E</span><span style="letter-spacing:-0.559px">dge</span></span>
<span class="t" style="left:643.25px;top:279px;line-height:13px;font-size:9.6px;color:#6a6a6a;"><span style="letter-spacing:-0.043px">N</span><span style="letter-spacing:-0.022px">ot </span><span style="letter-spacing:-0.040px">E</span><span style="letter-spacing:-0.030px">nabled</span></span>
<span class="t" style="left:725.50px;top:279px;line-height:13px;font-size:9.6px;color:#6a6a6a;"><span style="letter-spacing:-0.174px">N</span><span style="letter-spacing:-0.089px">ot </span><span style="letter-spacing:-0.161px">E</span><span style="letter-spacing:-0.121px">nabled</span></span>
<span class="t" style="left:807.50px;top:279px;line-height:13px;font-size:9.6px;color:#6a6a6a;"><span style="letter-spacing:-0.176px">E</span><span style="letter-spacing:-0.132px">nabled</span></span>
<span class="t" style="left:872.50px;top:279px;line-height:13px;font-size:9.6px;color:#6a6a6a;"><span style="letter-spacing:-0.176px">E</span><span style="letter-spacing:-0.132px">nabled</span></span>
<div class="a" style="left:0;top:0;width:971px;height:532px;overflow:hidden"><span class="t" style="left:924.25px;top:279px;line-height:13px;font-size:9.6px;color:#6a6a6a;"><span style="letter-spacing:-0.205px">SDWAN</span><span style="letter-spacing:0.148px">, </span><span style="letter-spacing:-0.208px">MP</span></span></div>
<span class="t" style="left:215.60px;top:305px;line-height:13px;font-size:9.6px;color:#2f7db6;"><span style="letter-spacing:-0.459px">F</span><span style="letter-spacing:0.009px">usion </span><span style="letter-spacing:-0.500px">S</span><span style="letter-spacing:0.009px">tandard </span><span style="letter-spacing:-0.500px">E</span><span style="letter-spacing:0.008px">nterprise </span><span style="letter-spacing:-0.459px">T</span><span style="letter-spacing:0.009px">emplate - </span><span style="letter-spacing:-0.562px">DO</span><span style="letter-spacing:0.006px"> </span><span style="letter-spacing:-0.528px">NOT</span><span style="letter-spacing:0.006px"> </span><span style="letter-spacing:-0.427px">EDIT</span></span>
<span class="t" style="left:482.50px;top:305px;line-height:13px;font-size:9.6px;color:#3286b6;"><span style="letter-spacing:-0.025px">P</span><span style="letter-spacing:-0.017px">roduction </span><span style="letter-spacing:-0.025px">P</span><span style="letter-spacing:-0.017px">ool</span></span>
<span class="t" style="left:565.75px;top:305px;line-height:13px;font-size:9.6px;color:#6a6a6a;"><span style="letter-spacing:1.406px">0</span></span>
<span class="t" style="left:643.25px;top:305px;line-height:13px;font-size:9.6px;color:#6a6a6a;"><span style="letter-spacing:-0.043px">N</span><span style="letter-spacing:-0.022px">ot </span><span style="letter-spacing:-0.040px">E</span><span style="letter-spacing:-0.030px">nabled</span></span>
<span class="t" style="left:725.50px;top:305px;line-height:13px;font-size:9.6px;color:#6a6a6a;"><span style="letter-spacing:-0.174px">N</span><span style="letter-spacing:-0.089px">ot </span><span style="letter-spacing:-0.161px">E</span><span style="letter-spacing:-0.121px">nabled</span></span>
<span class="t" style="left:807.50px;top:305px;line-height:13px;font-size:9.6px;color:#6a6a6a;"><span style="letter-spacing:-0.176px">E</span><span style="letter-spacing:-0.132px">nabled</span></span>
<span class="t" style="left:872.50px;top:305px;line-height:13px;font-size:9.6px;color:#6a6a6a;"><span style="letter-spacing:-0.176px">E</span><span style="letter-spacing:-0.132px">nabled</span></span>
<div class="a" style="left:0;top:0;width:971px;height:532px;overflow:hidden"><span class="t" style="left:924.25px;top:305px;line-height:13px;font-size:9.6px;color:#6a6a6a;"><span style="letter-spacing:-0.205px">SDWAN</span><span style="letter-spacing:0.148px">, </span><span style="letter-spacing:-0.208px">MP</span></span></div>
<span class="t" style="left:215.60px;top:330px;line-height:13px;font-size:9.6px;color:#2f7db6;"><span style="letter-spacing:-0.547px">SWIS_TESTING_FP</span><span style="letter-spacing:-0.064px">1283 </span><span style="letter-spacing:-0.640px">D</span><span style="letter-spacing:-0.058px">ue date calculation -3976497</span></span>
<span class="t" style="left:482.50px;top:330px;line-height:13px;font-size:9.6px;color:#3286b6;"><span style="letter-spacing:-0.025px">P</span><span style="letter-spacing:-0.017px">roduction </span><span style="letter-spacing:-0.025px">P</span><span style="letter-spacing:-0.017px">ool</span></span>
<span class="t" style="left:565.75px;top:330px;line-height:13px;font-size:9.6px;color:#6a6a6a;"><span style="letter-spacing:-0.420px">1 </span><span style="letter-spacing:-0.671px">E</span><span style="letter-spacing:-0.559px">dge</span></span>
<span class="t" style="left:643.25px;top:330px;line-height:13px;font-size:9.6px;color:#6a6a6a;"><span style="letter-spacing:-0.043px">N</span><span style="letter-spacing:-0.022px">ot </span><span style="letter-spacing:-0.040px">E</span><span style="letter-spacing:-0.030px">nabled</span></span>
<span class="t" style="left:725.50px;top:330px;line-height:13px;font-size:9.6px;color:#6a6a6a;"><span style="letter-spacing:-0.174px">N</span><span style="letter-spacing:-0.089px">ot </span><span style="letter-spacing:-0.161px">E</span><span style="letter-spacing:-0.121px">nabled</span></span>
<span class="t" style="left:807.50px;top:330px;line-height:13px;font-size:9.6px;color:#6a6a6a;"><span style="letter-spacing:-0.176px">E</span><span style="letter-spacing:-0.132px">nabled</span></span>
<span class="t" style="left:872.50px;top:330px;line-height:13px;font-size:9.6px;color:#6a6a6a;"><span style="letter-spacing:-0.176px">E</span><span style="letter-spacing:-0.132px">nabled</span></span>
<div class="a" style="left:0;top:0;width:971px;height:532px;overflow:hidden"><span class="t" style="left:924.25px;top:330px;line-height:13px;font-size:9.6px;color:#6a6a6a;"><span style="letter-spacing:-0.205px">SDWAN</span><span style="letter-spacing:0.148px">, </span><span style="letter-spacing:-0.208px">MP</span></span></div>
<span class="t" style="left:215.60px;top:356px;line-height:13px;font-size:9.6px;color:#2f7db6;"><span style="letter-spacing:-0.439px">F</span><span style="letter-spacing:0.026px">usion</span><span style="letter-spacing:-0.459px">_R</span><span style="letter-spacing:0.030px">emote</span><span style="letter-spacing:-0.479px">_O</span><span style="letter-spacing:0.020px">ffice</span><span style="letter-spacing:-0.505px">_GG</span><span style="letter-spacing:0.029px">umataotao</span></span>
<span class="t" style="left:482.50px;top:356px;line-height:13px;font-size:9.6px;color:#3286b6;"><span style="letter-spacing:-0.025px">P</span><span style="letter-spacing:-0.017px">roduction </span><span style="letter-spacing:-0.025px">P</span><span style="letter-spacing:-0.017px">ool</span></span>
<span class="t" style="left:565.75px;top:356px;line-height:13px;font-size:9.6px;color:#6a6a6a;"><span style="letter-spacing:-0.420px">1 </span><span style="letter-spacing:-0.671px">E</span><span style="letter-spacing:-0.559px">dge</span></span>
<span class="t" style="left:643.25px;top:356px;line-height:13px;font-size:9.6px;color:#6a6a6a;"><span style="letter-spacing:-0.043px">N</span><span style="letter-spacing:-0.022px">ot </span><span style="letter-spacing:-0.040px">E</span><span style="letter-spacing:-0.030px">nabled</span></span>
<span class="t" style="left:725.50px;top:356px;line-height:13px;font-size:9.6px;color:#6a6a6a;"><span style="letter-spacing:-0.174px">N</span><span style="letter-spacing:-0.089px">ot </span><span style="letter-spacing:-0.161px">E</span><span style="letter-spacing:-0.121px">nabled</span></span>
<span class="t" style="left:807.50px;top:356px;line-height:13px;font-size:9.6px;color:#6a6a6a;"><span style="letter-spacing:-0.176px">E</span><span style="letter-spacing:-0.132px">nabled</span></span>
<span class="t" style="left:872.50px;top:356px;line-height:13px;font-size:9.6px;color:#6a6a6a;"><span style="letter-spacing:-0.176px">E</span><span style="letter-spacing:-0.132px">nabled</span></span>
<div class="a" style="left:0;top:0;width:971px;height:532px;overflow:hidden"><span class="t" style="left:924.25px;top:356px;line-height:13px;font-size:9.6px;color:#6a6a6a;"><span style="letter-spacing:-0.205px">SDWAN</span><span style="letter-spacing:0.148px">, </span><span style="letter-spacing:-0.208px">MP</span></span></div>
<span class="t" style="left:215.60px;top:381px;line-height:13px;font-size:9.6px;color:#2f7db6;"><span style="letter-spacing:-0.417px">SWIS_TESTING_FC_UAT_SDWAN_C</span><span style="letter-spacing:0.061px">lone</span><span style="letter-spacing:-0.398px">T</span><span style="letter-spacing:0.057px">est</span><span style="letter-spacing:-0.362px">_</span><span style="letter-spacing:0.065px">01 -3975046</span></span>
<span class="t" style="left:482.50px;top:381px;line-height:13px;font-size:9.6px;color:#3286b6;"><span style="letter-spacing:-0.025px">P</span><span style="letter-spacing:-0.017px">roduction </span><span style="letter-spacing:-0.025px">P</span><span style="letter-spacing:-0.017px">ool</span></span>
<span class="t" style="left:565.75px;top:381px;line-height:13px;font-size:9.6px;color:#6a6a6a;"><span style="letter-spacing:-0.078px">2 </span><span style="letter-spacing:-0.124px">E</span><span style="letter-spacing:-0.101px">dges</span></span>
<span class="t" style="left:643.25px;top:381px;line-height:13px;font-size:9.6px;color:#6a6a6a;"><span style="letter-spacing:-0.043px">N</span><span style="letter-spacing:-0.022px">ot </span><span style="letter-spacing:-0.040px">E</span><span style="letter-spacing:-0.030px">nabled</span></span>
<span class="t" style="left:725.50px;top:381px;line-height:13px;font-size:9.6px;color:#6a6a6a;"><span style="letter-spacing:-0.174px">N</span><span style="letter-spacing:-0.089px">ot </span><span style="letter-spacing:-0.161px">E</span><span style="letter-spacing:-0.121px">nabled</span></span>
<span class="t" style="left:807.50px;top:381px;line-height:13px;font-size:9.6px;color:#6a6a6a;"><span style="letter-spacing:-0.176px">E</span><span style="letter-spacing:-0.132px">nabled</span></span>
<span class="t" style="left:872.50px;top:381px;line-height:13px;font-size:9.6px;color:#6a6a6a;"><span style="letter-spacing:-0.176px">E</span><span style="letter-spacing:-0.132px">nabled</span></span>
<div class="a" style="left:0;top:0;width:971px;height:532px;overflow:hidden"><span class="t" style="left:924.25px;top:381px;line-height:13px;font-size:9.6px;color:#6a6a6a;"><span style="letter-spacing:-0.205px">SDWAN</span><span style="letter-spacing:0.148px">, </span><span style="letter-spacing:-0.208px">MP</span></span></div>
<span class="t" style="left:215.60px;top:407px;line-height:13px;font-size:9.6px;color:#2f7db6;"><span style="letter-spacing:-0.475px">SWIS_TESTING_S</span><span style="letter-spacing:0.000px">p-08</span><span style="letter-spacing:-0.491px">_R</span><span style="letter-spacing:0.000px">egression</span><span style="letter-spacing:-0.427px">_</span><span style="letter-spacing:0.000px">clarity -3975236</span></span>
<span class="t" style="left:482.50px;top:407px;line-height:13px;font-size:9.6px;color:#3286b6;"><span style="letter-spacing:-0.025px">P</span><span style="letter-spacing:-0.017px">roduction </span><span style="letter-spacing:-0.025px">P</span><span style="letter-spacing:-0.017px">ool</span></span>
<span class="t" style="left:565.75px;top:407px;line-height:13px;font-size:9.6px;color:#6a6a6a;"><span style="letter-spacing:-0.420px">1 </span><span style="letter-spacing:-0.671px">E</span><span style="letter-spacing:-0.559px">dge</span></span>
<span class="t" style="left:643.25px;top:407px;line-height:13px;font-size:9.6px;color:#6a6a6a;"><span style="letter-spacing:-0.043px">N</span><span style="letter-spacing:-0.022px">ot </span><span style="letter-spacing:-0.040px">E</span><span style="letter-spacing:-0.030px">nabled</span></span>
<span class="t" style="left:725.50px;top:407px;line-height:13px;font-size:9.6px;color:#6a6a6a;"><span style="letter-spacing:-0.174px">N</span><span style="letter-spacing:-0.089px">ot </span><span style="letter-spacing:-0.161px">E</span><span style="letter-spacing:-0.121px">nabled</span></span>
<span class="t" style="left:807.50px;top:407px;line-height:13px;font-size:9.6px;color:#6a6a6a;"><span style="letter-spacing:-0.176px">E</span><span style="letter-spacing:-0.132px">nabled</span></span>
<span class="t" style="left:872.50px;top:407px;line-height:13px;font-size:9.6px;color:#6a6a6a;"><span style="letter-spacing:-0.176px">E</span><span style="letter-spacing:-0.132px">nabled</span></span>
<div class="a" style="left:0;top:0;width:971px;height:532px;overflow:hidden"><span class="t" style="left:924.25px;top:407px;line-height:13px;font-size:9.6px;color:#6a6a6a;"><span style="letter-spacing:-0.205px">SDWAN</span><span style="letter-spacing:0.148px">, </span><span style="letter-spacing:-0.208px">MP</span></span></div>
<span class="t" style="left:215.60px;top:433px;line-height:13px;font-size:9.6px;color:#2f7db6;"><span style="letter-spacing:-0.395px">SWIS_TESTING_T</span><span style="letter-spacing:0.055px">est </span><span style="letter-spacing:-0.474px">SDWAN</span><span style="letter-spacing:0.068px"> -3975630</span></span>
<span class="t" style="left:482.50px;top:433px;line-height:13px;font-size:9.6px;color:#3286b6;"><span style="letter-spacing:-0.025px">P</span><span style="letter-spacing:-0.017px">roduction </span><span style="letter-spacing:-0.025px">P</span><span style="letter-spacing:-0.017px">ool</span></span>
<span class="t" style="left:565.75px;top:433px;line-height:13px;font-size:9.6px;color:#6a6a6a;"><span style="letter-spacing:-0.420px">1 </span><span style="letter-spacing:-0.671px">E</span><span style="letter-spacing:-0.559px">dge</span></span>
<span class="t" style="left:643.25px;top:433px;line-height:13px;font-size:9.6px;color:#6a6a6a;"><span style="letter-spacing:-0.043px">N</span><span style="letter-spacing:-0.022px">ot </span><span style="letter-spacing:-0.040px">E</span><span style="letter-spacing:-0.030px">nabled</span></span>
<span class="t" style="left:725.50px;top:433px;line-height:13px;font-size:9.6px;color:#6a6a6a;"><span style="letter-spacing:-0.174px">N</span><span style="letter-spacing:-0.089px">ot </span><span style="letter-spacing:-0.161px">E</span><span style="letter-spacing:-0.121px">nabled</span></span>
<span class="t" style="left:807.50px;top:433px;line-height:13px;font-size:9.6px;color:#6a6a6a;"><span style="letter-spacing:-0.176px">E</span><span style="letter-spacing:-0.132px">nabled</span></span>
<span class="t" style="left:872.50px;top:433px;line-height:13px;font-size:9.6px;color:#6a6a6a;"><span style="letter-spacing:-0.176px">E</span><span style="letter-spacing:-0.132px">nabled</span></span>
<div class="a" style="left:0;top:0;width:971px;height:532px;overflow:hidden"><span class="t" style="left:924.25px;top:433px;line-height:13px;font-size:9.6px;color:#6a6a6a;"><span style="letter-spacing:-0.205px">SDWAN</span><span style="letter-spacing:0.148px">, </span><span style="letter-spacing:-0.208px">MP</span></span></div>
<span class="t" style="left:215.60px;top:458px;line-height:13px;font-size:9.6px;color:#2f7db6;"><span style="letter-spacing:-0.450px">T</span><span style="letter-spacing:0.014px">aylor </span><span style="letter-spacing:-0.450px">T</span><span style="letter-spacing:0.015px">ransportation </span><span style="letter-spacing:-0.205px">I</span><span style="letter-spacing:0.018px">nc -3979277</span></span>
<span class="t" style="left:482.50px;top:458px;line-height:13px;font-size:9.6px;color:#3286b6;"><span style="letter-spacing:-0.025px">P</span><span style="letter-spacing:-0.017px">roduction </span><span style="letter-spacing:-0.025px">P</span><span style="letter-spacing:-0.017px">ool</span></span>
<span class="t" style="left:565.75px;top:458px;line-height:13px;font-size:9.6px;color:#6a6a6a;"><span style="letter-spacing:-0.420px">1 </span><span style="letter-spacing:-0.671px">E</span><span style="letter-spacing:-0.559px">dge</span></span>
<span class="t" style="left:643.25px;top:458px;line-height:13px;font-size:9.6px;color:#6a6a6a;"><span style="letter-spacing:-0.043px">N</span><span style="letter-spacing:-0.022px">ot </span><span style="letter-spacing:-0.040px">E</span><span style="letter-spacing:-0.030px">nabled</span></span>
<span class="t" style="left:725.50px;top:458px;line-height:13px;font-size:9.6px;color:#6a6a6a;"><span style="letter-spacing:-0.174px">N</span><span style="letter-spacing:-0.089px">ot </span><span style="letter-spacing:-0.161px">E</span><span style="letter-spacing:-0.121px">nabled</span></span>
<span class="t" style="left:807.50px;top:458px;line-height:13px;font-size:9.6px;color:#6a6a6a;"><span style="letter-spacing:-0.176px">E</span><span style="letter-spacing:-0.132px">nabled</span></span>
<span class="t" style="left:872.50px;top:458px;line-height:13px;font-size:9.6px;color:#6a6a6a;"><span style="letter-spacing:-0.176px">E</span><span style="letter-spacing:-0.132px">nabled</span></span>
<div class="a" style="left:0;top:0;width:971px;height:532px;overflow:hidden"><span class="t" style="left:924.25px;top:458px;line-height:13px;font-size:9.6px;color:#6a6a6a;"><span style="letter-spacing:-0.205px">SDWAN</span><span style="letter-spacing:0.148px">, </span><span style="letter-spacing:-0.208px">MP</span></span></div>
<span class="t" style="left:215.60px;top:484px;line-height:13px;font-size:9.6px;color:#2f7db6;"><span style="letter-spacing:-0.489px">L</span><span style="letter-spacing:-0.055px">aborers </span><span style="letter-spacing:-0.538px">T</span><span style="letter-spacing:-0.049px">raining </span><span style="letter-spacing:-0.586px">A</span><span style="letter-spacing:-0.056px">nd </span><span style="letter-spacing:-0.635px">R</span><span style="letter-spacing:-0.049px">etraining </span><span style="letter-spacing:-0.538px">F</span><span style="letter-spacing:-0.064px">und-3773615</span></span>
<span class="t" style="left:482.50px;top:484px;line-height:13px;font-size:9.6px;color:#3286b6;"><span style="letter-spacing:-0.025px">P</span><span style="letter-spacing:-0.017px">roduction </span><span style="letter-spacing:-0.025px">P</span><span style="letter-spacing:-0.017px">ool</span></span>
<span class="t" style="left:565.75px;top:484px;line-height:13px;font-size:9.6px;color:#6a6a6a;"><span style="letter-spacing:-0.078px">2 </span><span style="letter-spacing:-0.124px">E</span><span style="letter-spacing:-0.101px">dges</span></span>
<span class="t" style="left:643.25px;top:484px;line-height:13px;font-size:9.6px;color:#6a6a6a;"><span style="letter-spacing:-0.043px">N</span><span style="letter-spacing:-0.022px">ot </span><span style="letter-spacing:-0.040px">E</span><span style="letter-spacing:-0.030px">nabled</span></span>
<span class="t" style="left:725.50px;top:484px;line-height:13px;font-size:9.6px;color:#6a6a6a;"><span style="letter-spacing:-0.174px">N</span><span style="letter-spacing:-0.089px">ot </span><span style="letter-spacing:-0.161px">E</span><span style="letter-spacing:-0.121px">nabled</span></span>
<span class="t" style="left:807.50px;top:484px;line-height:13px;font-size:9.6px;color:#6a6a6a;"><span style="letter-spacing:-0.176px">E</span><span style="letter-spacing:-0.132px">nabled</span></span>
<span class="t" style="left:872.50px;top:484px;line-height:13px;font-size:9.6px;color:#6a6a6a;"><span style="letter-spacing:-0.176px">E</span><span style="letter-spacing:-0.132px">nabled</span></span>
<div class="a" style="left:0;top:0;width:971px;height:532px;overflow:hidden"><span class="t" style="left:924.25px;top:484px;line-height:13px;font-size:9.6px;color:#6a6a6a;"><span style="letter-spacing:-0.205px">SDWAN</span><span style="letter-spacing:0.148px">, </span><span style="letter-spacing:-0.208px">MP</span></span></div>
<span class="t" style="left:215.60px;top:510px;line-height:13px;font-size:9.6px;color:#2f7db6;"><span style="letter-spacing:-0.109px">M</span><span style="letter-spacing:-0.050px">atrix</span><span style="letter-spacing:-0.080px">T</span><span style="letter-spacing:-0.058px">est</span></span>
<span class="t" style="left:482.50px;top:510px;line-height:13px;font-size:9.6px;color:#3286b6;"><span style="letter-spacing:-0.025px">P</span><span style="letter-spacing:-0.017px">roduction </span><span style="letter-spacing:-0.025px">P</span><span style="letter-spacing:-0.017px">ool</span></span>
<span class="t" style="left:565.75px;top:510px;line-height:13px;font-size:9.6px;color:#6a6a6a;"><span style="letter-spacing:1.406px">0</span></span>
<span class="t" style="left:643.25px;top:510px;line-height:13px;font-size:9.6px;color:#6a6a6a;"><span style="letter-spacing:-0.043px">N</span><span style="letter-spacing:-0.022px">ot </span><span style="letter-spacing:-0.040px">E</span><span style="letter-spacing:-0.030px">nabled</span></span>
<span class="t" style="left:725.50px;top:510px;line-height:13px;font-size:9.6px;color:#6a6a6a;"><span style="letter-spacing:-0.174px">N</span><span style="letter-spacing:-0.089px">ot </span><span style="letter-spacing:-0.161px">E</span><span style="letter-spacing:-0.121px">nabled</span></span>
<span class="t" style="left:807.50px;top:510px;line-height:13px;font-size:9.6px;color:#6a6a6a;"><span style="letter-spacing:-0.176px">E</span><span style="letter-spacing:-0.132px">nabled</span></span>
<span class="t" style="left:872.50px;top:510px;line-height:13px;font-size:9.6px;color:#6a6a6a;"><span style="letter-spacing:-0.176px">E</span><span style="letter-spacing:-0.132px">nabled</span></span>
<div class="a" style="left:0;top:0;width:971px;height:532px;overflow:hidden"><span class="t" style="left:924.25px;top:510px;line-height:13px;font-size:9.6px;color:#6a6a6a;"><span style="letter-spacing:-0.205px">SDWAN</span><span style="letter-spacing:0.148px">, </span><span style="letter-spacing:-0.208px">MP</span></span></div>
<span class="t" style="left:206.00px;top:550px;line-height:11px;font-size:7.4px;color:#707070;"><span style="letter-spacing:0.004px">COLUMNS</span></span>
<span class="t" style="left:279.50px;top:550px;line-height:11px;font-size:7.4px;color:#707070;"><span style="letter-spacing:-0.261px">REFRESH</span></span>
<span class="t" style="left:945.25px;top:550px;line-height:11px;font-size:7.6px;color:#666;"><span style="letter-spacing:-0.057px">21 items</span></span>
<!-- mask for services clipped by scrollbar -->
<div class="a" id="vsb"></div><div class="a" id="vthumb"></div>
<svg class="ic" style="left:973.400px;top:181.600px" width="5.400" height="3.200" viewBox="0 0 10 6"><path d="M0 6 L5 0 L10 6 Z" fill="#a3a3a3"/></svg>
<svg class="ic" style="left:973.400px;top:524.200px" width="5.400" height="3.200" viewBox="0 0 10 6"><path d="M0 0 L5 6 L10 0 Z" fill="#505050"/></svg>
<div class="a" id="hsb"></div><div class="a" id="hthumb"></div><div class="a" id="corner"></div>
<svg class="ic" style="left:185.600px;top:535px" width="3" height="5.200" viewBox="0 0 6 10"><path d="M6 0 L0 5 L6 10 Z" fill="#a3a3a3"/></svg>
<svg class="ic" style="left:962.600px;top:535px" width="3" height="5.200" viewBox="0 0 6 10"><path d="M0 0 L6 5 L0 10 Z" fill="#505050"/></svg>
<!-- footer icons -->
<svg class="ic" style="left:191.200px;top:550.600px" width="9" height="8.600" viewBox="0 0 18 17"><rect x="0.800" y="0.800" width="16.400" height="15.400" fill="none" stroke="#777" stroke-width="1.400"/><path d="M6.200 1 L6.200 16" stroke="#777" stroke-width="1.300"/><rect x="11.400" y="1" width="5.600" height="15" fill="#777"/></svg>
<svg class="ic" style="left:265px;top:549.800px" width="10.200" height="10.600" viewBox="0 0 20 21"><path d="M17.600 11.600 A7.800 7.800 0 1 1 12.400 4.200" fill="none" stroke="#6a6a6a" stroke-width="1.500" stroke-linecap="round"/><path d="M12.600 0.800 L17.600 3.600 L13.400 7.200" fill="none" stroke="#6a6a6a" stroke-width="1.500" stroke-linecap="round" stroke-linejoin="round"/></svg>
<!-- redraw table border right/bottom part over scrollbars -->
<div class="a" style="left:981.600px;top:179px;width:1px;height:388px;background:#dddddd"></div>
<!-- support tab -->
<div class="a" id="support"></div>
<div class="t" style="left:991.300px;top:271.600px;transform:translate(-50%,-50%) rotate(-90deg);font-size:7.500px;color:#a3b3c0;letter-spacing:0.200px;line-height:10px">SUPPORT</div>
<svg class="ic" style="left:987.400px;top:294.600px" width="8" height="7.600" viewBox="0 0 16 15"><path d="M7 1 L1.600 7.500 L7 14 M14 1 L8.600 7.500 L14 14" fill="none" stroke="#a3b3c0" stroke-width="1.500" stroke-linecap="round" stroke-linejoin="round"/></svg>
<!-- announce -->
<div class="a" style="left:21.700px;top:520.100px;width:28px;height:28px;border-radius:50%;background:rgba(140,180,90,0.130)"></div>
<div class="a" style="left:-1px;top:527.1px;width:38.2px;height:38.2px;border-radius:50%;background:#0b78b8"></div>
<svg class="ic" style="left:0;top:510px" width="70" height="57" viewBox="0 0 70 57"><g fill="none" stroke="#fff" stroke-width="1.300" stroke-linejoin="round" stroke-linecap="round"><path d="M11.1 34.500 L19.600 26.700 L22.900 40.200 L11.900 39.600 Z"/><path d="M5.500 35.300 L11.100 34.400 L11.900 39.600 L6.500 40.300 Z"/><path d="M8.600 40.300 L10.100 46.300 L12.200 45.800 L11 39.900"/><path d="M21.300 31.300 C23.400 30.600 24.300 34.400 22.300 35.300"/><path d="M24.600 28.700 L26 28.200 M26.400 32.400 L28.700 32 M27 35.700 L30.700 36.700"/></g></svg>
<div class="a" style="left:25px;top:525.100px;width:19px;height:18.400px;border-radius:50%;background:#60a31f"></div>
<div class="t" style="left:31.900px;top:529.500px;font-size:9.200px;line-height:11px;color:#fff">9</div>
</body></html>
